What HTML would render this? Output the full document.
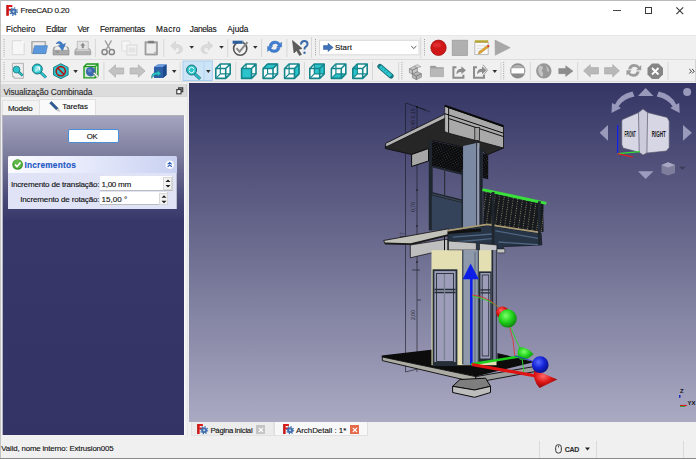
<!DOCTYPE html>
<html><head><meta charset="utf-8">
<style>
*{margin:0;padding:0;box-sizing:border-box}
html,body{width:696px;height:459px;overflow:hidden;background:#f0f0f0}
body{position:relative;font-family:"Liberation Sans",sans-serif;color:#1e1e1e}
.a{position:absolute}
.t{position:absolute;white-space:nowrap;line-height:1;font-size:7.8px;color:#111;-webkit-text-stroke:.12px currentColor}
.sep{position:absolute;width:1px;background:#d4d4d4}
.grip{position:absolute;width:1px;border-left:1px dotted #a8a8a8}
svg{position:absolute;overflow:visible}
</style></head><body>
<!-- window frame -->
<div class="a" style="left:0;top:0;width:696px;height:35px;background:#fff"></div>
<div class="a" style="left:0;top:0;width:696px;height:1px;background:#b9b9b9"></div>
<div class="a" style="left:0;top:0;width:1px;height:459px;background:#c4c4c4"></div>

<!-- title -->
<svg style="left:4px;top:3px" width="16" height="15" viewBox="0 0 16 15"><path d="M2.5,2.1H8.3V4.1H4.9V5.7H7.4V7.5H4.9V12.7H2.5Z" fill="#dc1a1a"/><path d="M2.5,2.1H3.3V12.7H2.5Z" fill="#a80d0d"/><circle cx="9.6" cy="8.6" r="3.1" fill="#416fae"/><circle cx="9.6" cy="8.6" r="3.7" fill="none" stroke="#416fae" stroke-width="1.3" stroke-dasharray="1.3 1.6"/><circle cx="9.6" cy="8.6" r="1.1" fill="#c8d4e8"/></svg>
<div class="t" style="left:20.53px;top:7.35px;font-size:8.09px;color:#111;letter-spacing:-0.236px">FreeCAD 0.20</div>
<div class="a" style="left:613.2px;top:10px;width:7.5px;height:1px;background:#444"></div>
<div class="a" style="left:644.6px;top:7.4px;width:7.2px;height:6.6px;border:1.1px solid #3a3a3a"></div>
<svg style="left:676.3px;top:7.3px" width="8" height="8"><path d="M0.4 0.4L7.2 7.2M7.2 0.4L0.4 7.2" stroke="#3a3a3a" stroke-width="1.15"/></svg>

<!-- menu -->
<div class="t" style="left:6.12px;top:25.38px;font-size:8.29px;letter-spacing:-0.043px">Ficheiro</div>
<div class="t" style="left:46.12px;top:25.38px;font-size:8.29px;letter-spacing:-0.2px">Editar</div>
<div class="t" style="left:77.42px;top:25.38px;font-size:8.29px;letter-spacing:-0.3px">Ver</div>
<div class="t" style="left:99.92px;top:25.38px;font-size:8.29px;letter-spacing:-0.16px">Ferramentas</div>
<div class="t" style="left:156.02px;top:25.38px;font-size:8.29px;letter-spacing:0.35px">Macro</div>
<div class="t" style="left:189.82px;top:25.38px;font-size:8.29px;letter-spacing:-0.3px">Janelas</div>
<div class="t" style="left:227.32px;top:25.38px;font-size:8.29px;letter-spacing:-0.025px">Ajuda</div>

<!-- toolbars -->
<div class="a" style="left:1px;top:35px;width:695px;height:1px;background:#e8e8e8"></div>
<div class="a" style="left:1px;top:59px;width:695px;height:1px;background:#dcdcdc"></div>
<div class="a" style="left:1px;top:81px;width:695px;height:1px;background:#dcdcdc"></div>
<div id="tb"><svg style="left:0;top:0" width="696" height="90" viewBox="0 0 696 90"><path d="M4,39V57" stroke="#a0a0a0" stroke-width="1" stroke-dasharray="1 1.2"/><g transform="translate(11.7,40.2) scale(1.0)"><path d="M0.5,0.5H10L12.5,3V14.5H0.5Z" fill="#f7f7f7" stroke="#d9d9d9"/><circle cx="11" cy="2" r="1.6" fill="#fff" stroke="#e0e0e0" stroke-width=".5"/></g><g transform="translate(31.2,40) scale(1.0)"><path d="M0.5,1.5H14.5V13.5H0.5Z" fill="#c4c4c4" stroke="#9c9c9c" stroke-width=".8"/><path d="M2,2.5H13V8H2Z" fill="#ececec"/><path d="M3.5,5.7H16.3L14.5,13.6H1.6Z" fill="#5a97dc" stroke="#3e78b8" stroke-width=".6"/></g><g transform="translate(53,40) scale(1.0)"><path d="M1,7H15L16,10V15H0V10Z" fill="#a9a9a9" stroke="#8a8a8a" stroke-width=".6"/><path d="M2.5,6.5H13.5L15,10H1Z" fill="#f2f2f2" stroke="#aaa" stroke-width=".5"/><path d="M2.5,12H6" stroke="#777" stroke-width=".8"/><path d="M3,3.5Q7,-1 10,4.5L12.5,3.5L9.5,10.5L5.5,5.5L8,5.2Q6,2.5 3,3.5Z" fill="#3c7cc6" stroke="#2a5e9e" stroke-width=".5"/></g><g transform="translate(74.8,40.8) scale(1.0)"><path d="M1,8H15L16,10.5V14H0V10.5Z" fill="#b0b0b0" stroke="#949494" stroke-width=".6"/><path d="M2.5,0.5H13.5V9H2.5Z" fill="#e4e4e4" stroke="#a4a4a4" stroke-width=".6"/><path d="M8,2L10.5,5H9V7.5H7V5H5.5Z" fill="#8a8a8a"/><path d="M1,9.5H15" stroke="#d8d8d8" stroke-width="1"/></g><rect x="94.9" y="39" width="1" height="18" fill="#d8d8d8"/><g transform="translate(101,40) scale(1.0)"><path d="M4,0.5L9,9M10.5,0.5L5.5,9" stroke="#9a9a9a" stroke-width="1.4"/><circle cx="3.6" cy="12" r="2.6" fill="none" stroke="#858585" stroke-width="1.5"/><circle cx="10.8" cy="12" r="2.6" fill="none" stroke="#858585" stroke-width="1.5"/></g><g transform="translate(121.4,40.5) scale(1.0)"><path d="M0.5,0.5H8.5V10.5H0.5Z" fill="#f6f6f6" stroke="#dedede"/><path d="M5.5,4.5H15.5V14.5H5.5Z" fill="#f2f2f2" stroke="#d6d6d6"/><path d="M7,7H14V12H7Z" fill="#e4e4e4"/></g><g transform="translate(144.2,40) scale(1.0)"><path d="M0.8,1.8H13.2V15H0.8Z" fill="#a8a8a8" stroke="#8c8c8c" stroke-width=".7"/><path d="M2.3,3.5H11.7V13.5H2.3Z" fill="#ededed"/><path d="M4,0.8H10V3.2H4Z" fill="#7c7c7c"/><path d="M9,13.5L11.7,11V13.5Z" fill="#b0b0b0"/></g><rect x="163.3" y="39" width="1" height="18" fill="#d8d8d8"/><g transform="translate(170,40.8) scale(1.0)"><path d="M5.5,0.5L0.5,5L5.5,9.5V6.8Q10,6.5 9.5,9.5Q9,12 6,12.5Q11.5,13.5 12.5,9Q13,4 5.5,3.5Z" fill="#dadada" stroke="#cfcfcf" stroke-width=".5"/></g><path d="M189.39999999999998,45.900000000000006H194.0L191.7,48.7Z" fill="#303030"/><g transform="translate(200.5,40.8) scale(1.0)"><path d="M7.5,0.5L12.5,5L7.5,9.5V6.8Q3,6.5 3.5,9.5Q4,12 7,12.5Q1.5,13.5 0.5,9Q0,4 7.5,3.5Z" fill="#dadada" stroke="#cfcfcf" stroke-width=".5"/></g><path d="M219.2,45.900000000000006H223.8L221.5,48.7Z" fill="#303030"/><rect x="227.2" y="39" width="1" height="18" fill="#d8d8d8"/><g transform="translate(232,40.2) scale(1.0)"><circle cx="8.2" cy="8.4" r="6.6" fill="#f4f4f4" stroke="#555" stroke-width="1.6"/><path d="M4.5,8L7.5,11.5L15.5,2" fill="none" stroke="#8a8a8a" stroke-width="2"/><path d="M0.6,0.5H10.5V3.6H0.6Z" fill="#2d5e9e"/><path d="M10.5,0.5H12L10.5,3.6Z" fill="#7da0cc"/></g><path d="M253.0,45.900000000000006H257.6L255.3,48.7Z" fill="#303030"/><rect x="261.0" y="39" width="1" height="18" fill="#d8d8d8"/><g transform="translate(267.6,40) scale(1.0)"><path d="M1.5,6Q2.5,1 7.5,1Q11,1 12.5,3.5L14,2V7H9L10.8,5.3Q9.5,3.5 7.5,3.5Q5,3.5 4.3,6Z" fill="#3d7fd4" stroke="#2a62ae" stroke-width=".4"/><path d="M12.5,7.5Q11.5,12.5 6.5,12.5Q3,12.5 1.5,10L0,11.5V6.5H5L3.2,8.2Q4.5,10 6.5,10Q9,10 9.7,7.5Z" fill="#3d7fd4" stroke="#2a62ae" stroke-width=".4"/></g><rect x="286.4" y="39" width="1" height="18" fill="#d8d8d8"/><g transform="translate(292,40) scale(1.0)"><path d="M0.5,0.5L10,8.5L6.5,9.5L9.5,14.5L7.5,15.5L4.5,10.5L2,13Z" fill="#5c5c5c" stroke="#3c3c3c" stroke-width=".5"/><path d="M9,4.5Q9,1 12.3,1Q15.5,1 15.5,4Q15.5,6 13.5,7Q12.5,7.5 12.5,9.5" fill="none" stroke="#3a6aa8" stroke-width="2"/><circle cx="12.5" cy="12.8" r="1.2" fill="#3a6aa8"/></g><rect x="311.0" y="37" width="1" height="21" fill="#d8d8d8"/><path d="M315.5,39V56" stroke="#a0a0a0" stroke-width="1" stroke-dasharray="1 1.2"/><rect x="319.5" y="40.3" width="99.5" height="14.5" fill="#fff" stroke="#d9d9d9" stroke-width="1"/><path d="M323.5,45.5H328V43.3L333.2,47.5L328,51.5V49.5H323.5Z" fill="#3f72b8" stroke="#2b5a98" stroke-width=".5"/><path d="M411.2,46L413.8,48.5L416.4,46" fill="none" stroke="#444" stroke-width=".9"/><rect x="420.2" y="37" width="1" height="21" fill="#d8d8d8"/><path d="M424.5,39V56" stroke="#a0a0a0" stroke-width="1" stroke-dasharray="1 1.2"/><circle cx="438.5" cy="47.8" r="7.7" fill="#d01818"/><circle cx="438.5" cy="47.8" r="7.7" fill="none" stroke="#9c0a0a" stroke-width=".7"/><ellipse cx="437" cy="45" rx="4" ry="2.5" fill="#f04040" opacity=".5"/><rect x="452.2" y="40.2" width="15.3" height="15.3" fill="#b0b0b0" stroke="#9a9a9a" stroke-width=".7"/><g transform="translate(474,39.8) scale(1.0)"><path d="M0.8,2.5H14.2V14.8H0.8Z" fill="#fafafa" stroke="#a8a8a8" stroke-width=".8"/><path d="M0.8,0.5H14.2V2.8H0.8Z" fill="#b6a52c"/><path d="M2.5,6H12M2.5,8.5H8M2.5,11H7" stroke="#c8c8c8" stroke-width=".6"/><path d="M5,12L13.5,5.5L15,7L6.5,13.5L4.3,14Z" fill="#e8a830" stroke="#a07010" stroke-width=".5"/><circle cx="14.3" cy="6.2" r="1.1" fill="#e03030"/></g><path d="M495,40.1L510.2,47.7L495.2,55.3Z" fill="#a8a8a8" stroke="#989898" stroke-width=".5"/><path d="M4,62V80" stroke="#a0a0a0" stroke-width="1" stroke-dasharray="1 1.2"/><g transform="translate(11.9,62.8) scale(1.0)"><path d="M0.5,0.5H11.5V15.5H2.5L0.5,13.5Z" fill="#ececec" stroke="#9a9a9a" stroke-width=".7"/><path d="M0.5,13.5H2.5V15.5Z" fill="#aaa"/><path d="M6.5,9L10.8,12.8" stroke="#18737a" stroke-width="2.6"/><path d="M6.5,9L10.8,12.8" stroke="#2cc4cc" stroke-width="1.4"/><circle cx="4.6" cy="6.8" r="3.4" fill="#2cc4cc" stroke="#18737a" stroke-width=".8"/></g><g transform="translate(31.5,62.5) scale(1.0)"><path d="M8.5,9.5L14.5,15" stroke="#18737a" stroke-width="3"/><path d="M8.5,9.5L14.5,15" stroke="#2cc4cc" stroke-width="1.7"/><circle cx="5.8" cy="6.5" r="5" fill="#2cc4cc" stroke="#18737a" stroke-width="1"/><circle cx="5.8" cy="6.5" r="3" fill="#7ee0e4"/><path d="M3.5,9L7.5,5M5,4.5H8V7.5" fill="none" stroke="#fff" stroke-width="1"/></g><g transform="translate(52.8,63.2) scale(1.0)"><path d="M8,0.5L15.3,4.2V11.8L8,15.5L0.7,11.8V4.2Z" fill="#2cc4cc" stroke="#18737a" stroke-width=".9"/><circle cx="8" cy="8" r="4.6" fill="none" stroke="#b01818" stroke-width="1.6"/><path d="M4.8,4.8L11.2,11.2" stroke="#b01818" stroke-width="1.6"/></g><path d="M73.3,70.10000000000001H77.89999999999999L75.6,72.9Z" fill="#303030"/><g transform="translate(83.2,63.2) scale(1.0)"><path d="M0.8,3.5L3.5,0.8H14.7V12L12,14.7H0.8Z" fill="#d8e8d8" stroke="#1c9a1c" stroke-width="1.4"/><path d="M0.8,3.5H12V14.7M12,3.5L14.7,0.8" fill="none" stroke="#1c9a1c" stroke-width="1.2"/><circle cx="7.5" cy="8.5" r="4.8" fill="#3c68ae"/><circle cx="6.5" cy="7.2" r="2" fill="#7aa0d8" opacity=".6"/><path d="M10,10L14,14.5L15.5,13L11,9Z" fill="#fff" stroke="#777" stroke-width=".5"/></g><rect x="103.4" y="62" width="1" height="18" fill="#d8d8d8"/><g transform="translate(108.2,64.5) scale(1.0)"><path d="M0.5,6.5L7.3,0.3V3.5H15.5V9.5H7.3V12.7Z" fill="#c2c2c2" stroke="#a6a6a6" stroke-width=".6"/></g><g transform="translate(129.6,64.5) scale(1.0)"><path d="M15.5,6.5L8.7,0.3V3.5H0.5V9.5H8.7V12.7Z" fill="#c2c2c2" stroke="#a6a6a6" stroke-width=".6"/></g><g transform="translate(151,63.6) scale(1.0)"><path d="M3,3.5L7,0.8H15.5V11.5L12,14.5H3Z" fill="#2d5ea8"/><path d="M3,3.5L7,0.8H15.5L12,3.5Z" fill="#6a9ade"/><path d="M12,3.5L15.5,0.8V11.5L12,14.5Z" fill="#1e4a8a"/><path d="M0.5,14.5Q0.5,8.5 6.5,8.5V6.5L10,10L6.5,13V11Q3,11 0.5,14.5Z" fill="#2cc4cc" stroke="#18737a" stroke-width=".6"/></g><path d="M171.89999999999998,70.10000000000001H176.5L174.2,72.9Z" fill="#303030"/><rect x="179.7" y="62" width="1" height="18" fill="#d8d8d8"/><rect x="183" y="61" width="29.3" height="19.5" fill="#cde4f7" stroke="#a6cdf0" stroke-width="1"/><rect x="203.6" y="61.5" width="0.8" height="18.5" fill="#b0d2f2"/><g transform="translate(185.6,63.8) scale(1.0)"><path d="M8.5,9.5L14.5,15" stroke="#18737a" stroke-width="3"/><path d="M8.5,9.5L14.5,15" stroke="#2cc4cc" stroke-width="1.7"/><circle cx="6" cy="6.2" r="5" fill="#2cc4cc" stroke="#18737a" stroke-width="1"/><path d="M3.5,6Q3.5,3.5 6,3.5Q8,3.5 8.5,5.5M8.5,6.5Q8.5,9 6,9Q4,9 3.5,7" fill="none" stroke="#fff" stroke-width=".9"/></g><path d="M206.0,70.10000000000001H210.60000000000002L208.3,72.9Z" fill="#303030"/><g transform="translate(215,63.2) scale(1.0)"><path d="M0.8,5.3H10.7V15.2H0.8Z" fill="#fff"/><path d="M0.8,5.3L5.3,0.8H15.2L10.7,5.3Z" fill="#fff"/><path d="M10.7,5.3L15.2,0.8V10.7L10.7,15.2Z" fill="#fff"/><path d="M5.3,0.8V10.7H15.2M5.3,10.7L0.8,15.2" fill="none" stroke="#15868c" stroke-width="1.2"/><path d="M0.8,5.3H10.7V15.2H0.8ZM0.8,5.3L5.3,0.8H15.2L10.7,5.3ZM10.7,5.3L15.2,0.8V10.7L10.7,15.2Z" fill="none" stroke="#15868c" stroke-width="1.6" stroke-linejoin="round"/></g><rect x="235.3" y="62" width="1" height="18" fill="#d8d8d8"/><g transform="translate(240.8,63.2) scale(1.0)"><path d="M0.8,5.3H10.7V15.2H0.8Z" fill="#fff"/><path d="M0.8,5.3L5.3,0.8H15.2L10.7,5.3Z" fill="#fff"/><path d="M10.7,5.3L15.2,0.8V10.7L10.7,15.2Z" fill="#fff"/><path d="M0.8,5.3H10.7V15.2H0.8Z" fill="#2cc4cc"/><path d="M5.3,0.8V10.7H15.2M5.3,10.7L0.8,15.2" fill="none" stroke="#15868c" stroke-width="1.2"/><path d="M0.8,5.3H10.7V15.2H0.8Z" fill="#2cc4cc" stroke="#15868c" stroke-width=".8"/><path d="M0.8,5.3H10.7V15.2H0.8ZM0.8,5.3L5.3,0.8H15.2L10.7,5.3ZM10.7,5.3L15.2,0.8V10.7L10.7,15.2Z" fill="none" stroke="#15868c" stroke-width="1.6" stroke-linejoin="round"/></g><g transform="translate(262.3,63.2) scale(1.0)"><path d="M0.8,5.3H10.7V15.2H0.8Z" fill="#fff"/><path d="M0.8,5.3L5.3,0.8H15.2L10.7,5.3Z" fill="#fff"/><path d="M10.7,5.3L15.2,0.8V10.7L10.7,15.2Z" fill="#fff"/><path d="M0.8,5.3L5.3,0.8H15.2L10.7,5.3Z" fill="#2cc4cc"/><path d="M5.3,0.8V10.7H15.2M5.3,10.7L0.8,15.2" fill="none" stroke="#15868c" stroke-width="1.2"/><path d="M0.8,5.3L5.3,0.8H15.2L10.7,5.3Z" fill="#2cc4cc" stroke="#15868c" stroke-width=".8"/><path d="M0.8,5.3H10.7V15.2H0.8ZM0.8,5.3L5.3,0.8H15.2L10.7,5.3ZM10.7,5.3L15.2,0.8V10.7L10.7,15.2Z" fill="none" stroke="#15868c" stroke-width="1.6" stroke-linejoin="round"/></g><g transform="translate(283.8,63.2) scale(1.0)"><path d="M0.8,5.3H10.7V15.2H0.8Z" fill="#fff"/><path d="M0.8,5.3L5.3,0.8H15.2L10.7,5.3Z" fill="#fff"/><path d="M10.7,5.3L15.2,0.8V10.7L10.7,15.2Z" fill="#fff"/><path d="M10.7,5.3L15.2,0.8V10.7L10.7,15.2Z" fill="#2cc4cc"/><path d="M5.3,0.8V10.7H15.2M5.3,10.7L0.8,15.2" fill="none" stroke="#15868c" stroke-width="1.2"/><path d="M10.7,5.3L15.2,0.8V10.7L10.7,15.2Z" fill="#2cc4cc" stroke="#15868c" stroke-width=".8"/><path d="M0.8,5.3H10.7V15.2H0.8ZM0.8,5.3L5.3,0.8H15.2L10.7,5.3ZM10.7,5.3L15.2,0.8V10.7L10.7,15.2Z" fill="none" stroke="#15868c" stroke-width="1.6" stroke-linejoin="round"/></g><rect x="303.9" y="62" width="1" height="18" fill="#d8d8d8"/><g transform="translate(309,63.2) scale(1.0)"><path d="M0.8,5.3H10.7V15.2H0.8Z" fill="#fff"/><path d="M0.8,5.3L5.3,0.8H15.2L10.7,5.3Z" fill="#fff"/><path d="M10.7,5.3L15.2,0.8V10.7L10.7,15.2Z" fill="#fff"/><path d="M5.3,0.8H15.2V10.7H5.3Z" fill="#2cc4cc"/><path d="M5.3,0.8V10.7H15.2M5.3,10.7L0.8,15.2" fill="none" stroke="#15868c" stroke-width="1.2"/><path d="M0.8,5.3H10.7V15.2H0.8ZM0.8,5.3L5.3,0.8H15.2L10.7,5.3ZM10.7,5.3L15.2,0.8V10.7L10.7,15.2Z" fill="none" stroke="#15868c" stroke-width="1.6" stroke-linejoin="round"/></g><g transform="translate(330.6,63.2) scale(1.0)"><path d="M0.8,5.3H10.7V15.2H0.8Z" fill="#fff"/><path d="M0.8,5.3L5.3,0.8H15.2L10.7,5.3Z" fill="#fff"/><path d="M10.7,5.3L15.2,0.8V10.7L10.7,15.2Z" fill="#fff"/><path d="M0.8,15.2L5.3,10.7H15.2L10.7,15.2Z" fill="#2cc4cc"/><path d="M5.3,0.8V10.7H15.2M5.3,10.7L0.8,15.2" fill="none" stroke="#15868c" stroke-width="1.2"/><path d="M0.8,5.3H10.7V15.2H0.8ZM0.8,5.3L5.3,0.8H15.2L10.7,5.3ZM10.7,5.3L15.2,0.8V10.7L10.7,15.2Z" fill="none" stroke="#15868c" stroke-width="1.6" stroke-linejoin="round"/></g><g transform="translate(352,63.2) scale(1.0)"><path d="M0.8,5.3H10.7V15.2H0.8Z" fill="#fff"/><path d="M0.8,5.3L5.3,0.8H15.2L10.7,5.3Z" fill="#fff"/><path d="M10.7,5.3L15.2,0.8V10.7L10.7,15.2Z" fill="#fff"/><path d="M0.8,5.3L5.3,0.8V10.7L0.8,15.2Z" fill="#2cc4cc"/><path d="M5.3,0.8V10.7H15.2M5.3,10.7L0.8,15.2" fill="none" stroke="#15868c" stroke-width="1.2"/><path d="M0.8,5.3H10.7V15.2H0.8ZM0.8,5.3L5.3,0.8H15.2L10.7,5.3ZM10.7,5.3L15.2,0.8V10.7L10.7,15.2Z" fill="none" stroke="#15868c" stroke-width="1.6" stroke-linejoin="round"/></g><rect x="372.0" y="62" width="1" height="18" fill="#d8d8d8"/><path d="M380,66.5L391,76" stroke="#18737a" stroke-width="5.2" stroke-linecap="round"/><path d="M380,66.5L391,76" stroke="#2cc4cc" stroke-width="3.6"/><path d="M381.5,68.5L383,67M384,71L385.5,69.5M386.5,73L388,71.5" stroke="#18737a" stroke-width=".6"/><rect x="398.2" y="62" width="1" height="18" fill="#d8d8d8"/><path d="M401.9,62V80" stroke="#a0a0a0" stroke-width="1" stroke-dasharray="1 1.2"/><g transform="translate(408.4,63.7) scale(1.0)"><path d="M1,5L6,2.5L9,4L4,6.5Z M1,5V9L4,10.5V6.5Z M4,6.5L9,4V8L4,10.5Z" fill="#c8c8c8" stroke="#7a7a7a" stroke-width=".6"/><path d="M4,10.5L9,8L13,10L8,12.5Z M4,10.5V14L8,16V12.5Z M8,12.5L13,10V13.5L8,16Z" fill="#b4b4b4" stroke="#7a7a7a" stroke-width=".6"/><path d="M6,2.5L9,1L12.5,3L9,4Z" fill="#d8d8d8" stroke="#7a7a7a" stroke-width=".5"/></g><g transform="translate(429.9,65.6) scale(1.0)"><path d="M0.5,0.5H5.5L7,2H13.5V11H0.5Z" fill="#a0a0a0" stroke="#909090" stroke-width=".5"/><path d="M0.5,3H13.5V11.2H0.5Z" fill="#b8b8b8"/></g><g transform="translate(451.4,63.7) scale(1.0)"><path d="M1,2.5H5V4.5H3V13H11V11H13V15H1Z" fill="#8c8c8c"/><path d="M5,10.5Q5,5 10,5V2.5L14.5,6.5L10,10.5V8Q7,8 5,10.5Z" fill="#8c8c8c"/></g><g transform="translate(472,63.7) scale(1.0)"><path d="M1,2.5H5V4.5H3V13H11V11H13V15H1Z" fill="#8c8c8c"/><path d="M5,10.5Q5,5 10,5V2.5L14.5,6.5L10,10.5V8Q7,8 5,10.5Z" fill="#8c8c8c"/><path d="M11,1L15.5,6.5L11,12" fill="none" stroke="#9c9c9c" stroke-width="1"/></g><path d="M492.5,70.10000000000001H497.1L494.8,72.9Z" fill="#303030"/><rect x="500.4" y="62" width="1" height="18" fill="#d8d8d8"/><path d="M503.7,62V80" stroke="#a0a0a0" stroke-width="1" stroke-dasharray="1 1.2"/><g transform="translate(510.3,62.8) scale(1.0)"><circle cx="7.5" cy="8" r="7.6" fill="#8c8c8c"/><path d="M1,6.5A7,7 0 0 1 14,6.5Z" fill="#b4b4b4"/><path d="M0.8,5H14.2V11H0.8Z" fill="#fff" stroke="#8a8a8a" stroke-width=".6"/></g><rect x="529.9" y="62" width="1" height="18" fill="#d8d8d8"/><g transform="translate(536,62.9) scale(1.0)"><circle cx="7.8" cy="8" r="7.7" fill="#999"/><path d="M4,2.5Q7.5,3 7,5.5Q5,7 6.5,9Q8,11 6,14Q3,12 2.5,9Q1.5,5 4,2.5Z" fill="#c4c4c4"/><path d="M10,3Q13.5,5 13,9L11,8Q10.5,5 10,3Z" fill="#bdbdbd"/></g><g transform="translate(558.2,65.5) scale(1.0)"><path d="M0.5,3H7.5V0.2L14.8,5.6L7.5,11V8.2H0.5Z" fill="#8c8c8c" stroke="#7a7a7a" stroke-width=".4"/></g><rect x="577.2" y="62" width="1" height="18" fill="#d8d8d8"/><g transform="translate(583,64.3) scale(1.0)"><path d="M0.5,6.5L7.3,0.3V3.3H15.5V9.7H7.3V12.7Z" fill="#b8b8b8" stroke="#a0a0a0" stroke-width=".5"/></g><g transform="translate(604,64.3) scale(1.0)"><path d="M15.5,6.5L8.7,0.3V3.3H0.5V9.7H8.7V12.7Z" fill="#b8b8b8" stroke="#a0a0a0" stroke-width=".5"/></g><g transform="translate(626.5,63) scale(1.0)"><g transform="scale(1.05)"><path d="M1.5,6Q2.5,1 7.5,1Q11,1 12.5,3.5L14,2V7H9L10.8,5.3Q9.5,3.5 7.5,3.5Q5,3.5 4.3,6Z" fill="#9c9c9c"/><path d="M12.5,8Q11.5,13 6.5,13Q3,13 1.5,10.5L0,12V7H5L3.2,8.7Q4.5,10.5 6.5,10.5Q9,10.5 9.7,8Z" fill="#9c9c9c"/></g></g><g transform="translate(647,63) scale(1.0)"><path d="M5,0.5H11.5L16,5V11.5L11.5,16H5L0.5,11.5V5Z" fill="#858585"/><path d="M5,5L11.5,11.5M11.5,5L5,11.5" stroke="#fff" stroke-width="1.8"/></g><rect x="667.5" y="62" width="1" height="18" fill="#d8d8d8"/><path d="M689.3,69L691.5,71.2L689.3,73.4M692.1,69L694.3,71.2L692.1,73.4" fill="none" stroke="#3a3a3a" stroke-width="1"/><rect x="695" y="60" width="1" height="22" fill="#d4d4d4"/></svg><div class="t" style="left:334.95px;top:44.31px;font-size:7.9px;color:#111;letter-spacing:0.1px">Start</div></div><!--/tb-->

<!-- combined view panel -->
<div class="a" style="left:1px;top:84px;width:185.5px;height:13px;background:#dcdcdc;border-right:1px solid #d0d0d0;border-bottom:1px solid #d6d6d6"></div>
<div class="t" style="left:3.42px;top:87.58px;font-size:8.29px;color:#2a2a2a;letter-spacing:-0.095px">Visualização Combinada</div>
<svg style="left:175.5px;top:87px" width="8" height="8"><rect x="2.6" y="0.8" width="4.2" height="4" fill="#888" stroke="#333" stroke-width="1"/><rect x="0.8" y="2.6" width="4.2" height="4.2" fill="#fff" stroke="#333" stroke-width="1.1"/></svg>

<div class="a" style="left:2px;top:100px;width:38px;height:16px;background:#f3f3f3;border:1px solid #e2e2e2;border-bottom:none"></div>
<div class="a" style="left:39px;top:98.5px;width:57px;height:18px;background:#fafafa;border:1px solid #e0e0e0;border-bottom:none"></div>
<div class="t" style="left:8.04px;top:104.54px;font-size:7.98px;color:#111;letter-spacing:-0.3px">Modelo</div>
<svg style="left:49px;top:100.5px" width="12" height="11"><path d="M0.6 2.2L2.4 0.4L9.2 7.2L7.4 9Z" fill="#2f5c98" stroke="#1e3e6c" stroke-width=".5"/><path d="M7.4 9L9.2 7.2L10.6 10.4Z" fill="#d8d8d8" stroke="#888" stroke-width=".4"/></svg>
<div class="t" style="left:62.24px;top:103.44px;font-size:7.98px;color:#111;letter-spacing:-0.067px">Tarefas</div>

<div class="a" style="left:2px;top:115.3px;width:181.5px;height:319.5px;background:linear-gradient(#a5a5c0 0px,#7b7b9c 40px,#4c4c7a 80px,#373769 105px,#333366 319px);border-left:1px solid #b4b4c4;border-top:1px solid #b0b0b8"></div><div class="a" style="left:183.5px;top:115.3px;width:1px;height:320px;background:#fafafa"></div>

<!-- OK button -->
<div class="a" style="left:68px;top:128.8px;width:50.5px;height:14.5px;background:#fff;border:1.3px solid #4b8fd6;border-radius:2px"></div>
<div class="t" style="left:86.86px;top:133.12px;font-size:7.77px;color:#111;letter-spacing:-0.3px">OK</div>

<!-- Incrementos box -->
<div class="a" style="left:8px;top:156px;width:169px;height:53px;background:#dfe3f5;border-radius:2px 2px 0 0;border-right:1px solid #b8bcd0"></div>
<div class="a" style="left:8px;top:156px;width:169px;height:16.5px;background:linear-gradient(90deg,#fbfbff,#e9ecfb 40%,#c9d1f2);border-radius:2px 2px 0 0"></div>
<svg style="left:12px;top:158.5px" width="12" height="11"><circle cx="5.6" cy="5.5" r="5.3" fill="#3d9a2d"/><circle cx="5.6" cy="5" r="4.2" fill="#63b84a"/><path d="M3 5.5L5 7.5L8.5 3.5" stroke="#fff" stroke-width="1.6" fill="none"/></svg>
<div class="t" style="left:24.42px;top:161.37px;font-size:8.3px;font-weight:bold;color:#2257c4;letter-spacing:0.21px">Incrementos</div>
<svg style="left:164.5px;top:159.5px" width="10" height="10"><circle cx="4.7" cy="4.7" r="4.5" fill="#fff" stroke="#c7cde6" stroke-width=".6"/><path d="M2.6 4.3L4.7 2.4L6.8 4.3M2.6 6.9L4.7 5L6.8 6.9" stroke="#2d5ab8" stroke-width="1.1" fill="none"/></svg>

<div class="t" style="left:10.93px;top:181.05px;font-size:8.09px;color:#111;letter-spacing:-0.2px">Incremento de translação:</div>
<div class="t" style="left:20.23px;top:195.85px;font-size:8.09px;color:#111;letter-spacing:-0.176px">Incremento de rotação:</div>

<div class="a" style="left:100px;top:176px;width:72.6px;height:14.5px;background:#fff;border-bottom:1px solid #bdbdbd;border-right:1px solid #d0d0d0"></div>
<div class="a" style="left:163px;top:177px;width:9px;height:12.5px;background:#f2f2f2;border:1px solid #d8d8d8"></div>
<svg style="left:165px;top:178px" width="6" height="11"><path d="M0.5 4L3 1.5L5.5 4Z M0.5 7L3 9.5L5.5 7Z" fill="#222"/></svg>
<div class="t" style="left:101.53px;top:180.65px;font-size:8.09px;color:#111;letter-spacing:-0.3px">1,00 mm</div>

<div class="a" style="left:100px;top:191.7px;width:67.7px;height:13.5px;background:#fff;border-bottom:1px solid #bdbdbd;border-right:1px solid #d0d0d0"></div>
<div class="a" style="left:158.5px;top:192.5px;width:9px;height:12px;background:#f2f2f2;border:1px solid #d8d8d8"></div>
<svg style="left:160.5px;top:193.5px" width="6" height="11"><path d="M0.5 3.8L3 1.3L5.5 3.8Z M0.5 6.7L3 9.2L5.5 6.7Z" fill="#222"/></svg>
<div class="t" style="left:101.53px;top:195.75px;font-size:8.09px;color:#111;letter-spacing:0.0px">15,00 °</div>

<!-- splitter -->
<div class="a" style="left:187px;top:83px;width:1px;height:354px;background:#e6e6e6"></div>

<!-- 3D view -->
<div class="a" id="view" style="left:189px;top:83px;width:507px;height:338.5px;background:linear-gradient(#353565 0%,#6f6f92 51%,#aaaac3 100%)"></div>
<svg id="scene" style="left:0;top:0" width="696" height="459" viewBox="0 0 696 459">
<defs>
<pattern id="dots" width="2.4" height="2.4" patternUnits="userSpaceOnUse" patternTransform="rotate(-30)"><rect width="2.4" height="2.4" fill="#0c0d10"/><circle cx="1.2" cy="1.2" r=".38" fill="#5e5a42"/></pattern>
<pattern id="mesh" width="4.6" height="2.3" patternUnits="userSpaceOnUse" patternTransform="rotate(8)"><rect width="4.6" height="2.3" fill="#16191e"/><circle cx="2.3" cy="1.15" r=".55" fill="#8e8866"/></pattern>
<radialGradient id="gs" cx=".4" cy=".35" r=".7"><stop offset="0" stop-color="#7dff6a"/><stop offset=".5" stop-color="#22d41c"/><stop offset="1" stop-color="#0e7a10"/></radialGradient>
<radialGradient id="rs" cx=".4" cy=".35" r=".7"><stop offset="0" stop-color="#ff6a6a"/><stop offset=".5" stop-color="#dd1515"/><stop offset="1" stop-color="#7a0a0a"/></radialGradient>
<radialGradient id="bs" cx=".4" cy=".35" r=".7"><stop offset="0" stop-color="#5a6aff"/><stop offset=".5" stop-color="#1525d8"/><stop offset="1" stop-color="#08107a"/></radialGradient>
</defs>
<!-- dimension lines -->
<g stroke="#151520" stroke-width=".7" fill="none" opacity=".85">
<path d="M405.5 103V372M417 107V372M406 103L426 110M417 107L430 112M417 128L427 131M405.5 372L417 369M412 253H418M412 270H420M417 300H421"/>
</g>
<g font-family="Liberation Sans" font-size="5.2" fill="#111" opacity=".8">
<text transform="translate(415,130) rotate(-90)">0,45  0,15</text>
<text transform="translate(415,212) rotate(-90)">0,70</text>
<text transform="translate(415,320) rotate(-90)">2,00</text>
<text transform="translate(404,238) rotate(-90)">17</text>
</g>
<circle cx="417" cy="107" r=".9" fill="#111"/><circle cx="417" cy="128" r=".8" fill="#111"/><circle cx="417" cy="190" r=".8" fill="#111"/><circle cx="417" cy="226" r=".8" fill="#111"/><circle cx="417" cy="262" r=".8" fill="#111"/>
<!-- roof -->
<polygon points="385.4,146 448.6,116 503.5,148 487,155 475,143 463.3,147 431,140 429,148.5 411.6,154.5 385.4,148.5" fill="#262626" stroke="#0a0a0a" stroke-width=".8"/>
<polygon points="385.4,143.5 445,114 448.6,116.5 386,147" fill="#b2b2b2" stroke="#0a0a0a" stroke-width=".8"/>
<polygon points="444.7,105.8 448.6,107.7 448.6,133.2 444.7,131.5" fill="#b6b6b6" stroke="#0a0a0a" stroke-width=".6"/>
<polygon points="448.6,107.7 503.5,126.4 503.5,148 448.6,133.2" fill="#a9a9a9" stroke="#0a0a0a" stroke-width=".8"/>
<path d="M444.7,105.6L503.5,126.2" stroke="#0a0a0a" stroke-width="2"/>
<path d="M444.7,113.6L503.5,133.2M448.6,118.5L503.5,136.6" stroke="#0a0a0a" stroke-width="1"/>
<polygon points="411.6,154.5 428.5,148.5 428.5,161 411.6,166.5" fill="#a6a6a6" stroke="#0a0a0a" stroke-width="1"/>
<!-- cabin -->
<rect x="428.8" y="140" width="3.9" height="90.4" fill="#1f262e"/>
<polygon points="432,141 463.3,147.5 463.3,173.5 432,166" fill="url(#dots)"/>
<polygon points="432.7,165.5 462.2,173 462.2,175 432.7,167.5" fill="#1f262e"/>
<rect x="444" y="168" width="1.2" height="27" fill="#2a3038"/>
<polygon points="431.8,192 462.2,199.5 462.2,203.5 431.8,196" fill="#1f262e"/>
<path d="M432,194L462,201.5" stroke="#56627a" stroke-width=".6"/>
<polygon points="431.8,195.5 462.2,203 462.2,228.5 431.8,230.4" fill="#35435a"/>
<rect x="461.5" y="170" width="1.6" height="60" fill="#1f262e"/>
<polygon points="463.1,146 476.2,143 476.2,229 463.1,229" fill="#7b8aa2"/>
<rect x="476.2" y="128" width="0.9" height="101" fill="#2a323c"/>
<rect x="477.1" y="143" width="2.4" height="86" fill="#949cae"/>
<rect x="474.8" y="127.5" width="4.7" height="13" fill="#a0a0a0" stroke="#0a0a0a" stroke-width=".7"/>
<rect x="479.5" y="148" width="3.2" height="81" fill="#1f262e"/>
<polygon points="482.7,153 488.2,155.3 488.2,179.2 482.7,178" fill="url(#dots)"/>
<!-- balcony -->
<polygon points="483.3,191 543.5,204 543.5,232 483.3,224" fill="url(#mesh)"/>
<path d="M482.4,189.6L546.3,203.4" stroke="#38e03a" stroke-width="3"/>
<!-- main floor slab -->
<polygon points="383.7,240.5 448.4,228.8 448.4,235.5 411,244.5 385,244" fill="#c2c2ba" stroke="#0a0a0a" stroke-width=".8"/>
<path d="M385,243.3L411,244L448,235" fill="none" stroke="#1a1a1a" stroke-width="1.6"/>
<polygon points="410.3,245 445.2,239.5 448,239.5 448,252 431,253 410.3,257.8" fill="#bebebe" stroke="#0a0a0a" stroke-width=".7"/>
<rect x="444" y="236" width="1" height="15" fill="#111"/>
<polygon points="447.9,231.6 487.4,225.3 541.1,233.2 541.9,245 503.2,246.6 503.2,252.5 447.9,250.5" fill="#263446" stroke="#0a0a0a" stroke-width=".6"/>
<path d="M452.6,237.1L492.1,234M495.3,230.8L539.5,238.7M455.8,242L492.1,238.7M498.5,242L541.1,245" stroke="#4f6580" stroke-width="1.3"/>
<polygon points="447.9,230.5 481,228.5 481,231.5 447.9,234" fill="#111"/>
<polygon points="448.5,241 476.3,243 476.3,250 448.5,250" fill="#c2c2c2" stroke="#111" stroke-width=".6"/>
<polygon points="479.5,243.4 496.9,245 496.9,252.2 479.5,252" fill="#c6c6c6" stroke="#111" stroke-width=".6"/>
<polygon points="496.9,249 504.8,249 504.8,252.9 496.9,252.9" fill="#c6c6c6" stroke="#111" stroke-width=".5"/>
<path d="M447.9,230.6L487.4,224.4L539.5,232.4" fill="none" stroke="#a99a72" stroke-width="1.8"/>
<rect x="491.7" y="192" width="2.7" height="52" fill="#1f262e"/>
<rect x="538" y="201.3" width="2.7" height="44" fill="#1f262e"/>
<!-- base top -->
<polygon points="381.7,355.5 433,349.5 497,353 534.5,362 475.8,376.6 381.7,357" fill="#0c0c0c"/>
<!-- lower floor -->
<rect x="431.5" y="250.2" width="65" height="115" fill="#e3dfb3"/>
<rect x="433.5" y="270.2" width="23" height="95" fill="#9d9db9" stroke="#252d36" stroke-width="1.8"/><rect x="433" y="362" width="24" height="4" fill="#252d36"/>
<rect x="436.5" y="273.5" width="17" height="88" fill="none" stroke="#2f3740" stroke-width="1"/>
<path d="M434.5,289.5H455.5M434.5,292.5H455.5" stroke="#252d36" stroke-width="1.3"/>
<rect x="443.8" y="274" width="1.3" height="86" fill="#7a7f90"/>
<rect x="462.2" y="250" width="16.6" height="115" fill="#8e9aab"/>
<rect x="462.2" y="250" width="1.2" height="114" fill="#3a4450"/>
<rect x="474.5" y="252" width="1" height="112" fill="#5e6a7a"/>
<rect x="477.8" y="250" width="1" height="114" fill="#3a4450"/>
<rect x="479.6" y="272.2" width="11.5" height="89" fill="#9d9db9" stroke="#252d36" stroke-width="1.6"/><rect x="479" y="358.5" width="12.5" height="3.5" fill="#252d36"/>
<rect x="482.2" y="275" width="6.5" height="81" fill="none" stroke="#2f3740" stroke-width=".9"/>
<path d="M480.5,289.8H490.5M480.5,292.8H490.5" stroke="#252d36" stroke-width="1.2"/>
<rect x="491.6" y="250" width="5.9" height="110" fill="#7d7f9a"/>
<rect x="491.6" y="250" width="1.6" height="110" fill="#252d36"/>
<rect x="495.8" y="250" width="1.2" height="110" fill="#3a4050"/>
<polygon points="470.6,263.6 462.7,279.3 478.8,279.3" fill="#0d1ee6"/>
<rect x="470" y="279" width="2.6" height="85.5" fill="#0d1ee6"/>
<!-- base slab -->
<polygon points="382.3,357 475.8,376.6 475.8,382.5 382.3,360.6" fill="#acaca4" stroke="#0a0a0a" stroke-width=".9"/>
<polygon points="475.8,376.6 534.5,366.5 534.5,371.7 475.8,382.5" fill="#9c9c9c" stroke="#0a0a0a" stroke-width=".9"/>
<polygon points="459.9,379.5 485.6,378.2 490.5,386.3 474.6,390 452.6,386.3" fill="#7e7e7e" stroke="#0a0a0a" stroke-width="1"/>
<polygon points="452.6,386.3 474.6,390 490.5,386.3 490.5,392.5 474.6,397.3 452.6,392.5" fill="#bdbdbd" stroke="#0a0a0a" stroke-width="1"/>
<!-- manipulator -->
<path d="M472,296Q505,302 510.7,327Q518,345 521,350L524,373" stroke="#30d030" stroke-width="1" fill="none"/>
<path d="M472,295Q500,298 509.6,327Q514,340 514.8,356" stroke="#e03030" stroke-width=".8" fill="none"/>
<ellipse cx="502.4" cy="312.4" rx="6.4" ry="6" fill="url(#rs)"/>
<circle cx="507.6" cy="318.4" r="9.2" fill="url(#gs)"/>
<path d="M471.2,364.3L521,356.2" stroke="#1ed01e" stroke-width="2.4"/>
<path d="M519,347.5Q526,346 533.5,354Q527,361 520,360Q516,354 519,347.5Z" fill="url(#gs)"/>
<path d="M514.8,355.8L532.4,361" stroke="#2030e0" stroke-width=".8"/>
<path d="M472,364.5L536,376" stroke="#e01212" stroke-width="3.2"/>
<path d="M534.4,369.8L557.3,379.5L539.6,388Q532,380 534.4,369.8Z" fill="url(#rs)"/>
<circle cx="540.2" cy="364.7" r="8.4" fill="url(#bs)"/>
<!-- nav cube -->
<g fill="#a4a4c6" opacity=".9">
<polygon points="645.6,88 638,95.9 653.5,95.9"/>
<polygon points="599.6,132.8 608,125 608,140.8"/>
<polygon points="691.9,132.8 683,125 683,140.8"/>
<polygon points="645.6,179 638,171.2 653.5,171.2"/>
<circle cx="687.1" cy="92" r="4"/>
<path d="M634.5,96.5Q623,99 618.5,106.5L621,108L611.5,113L612,103L615,104.5Q620,94 632.5,91.5Z"/>
<path d="M656.7,96.5Q668.2,99 672.7,106.5L670.2,108L679.7,113L679.2,103L676.2,104.5Q671.2,94 658.7,91.5Z"/>
</g>
<polygon points="661.5,165 668,162.3 675,165 675,173 668,175.5 661.5,173" fill="#7e7e9c"/>
<polygon points="661.5,165 668,162.3 675,165 668,167.5" fill="#a8a8c4"/>
<polygon points="679.5,166.8 685.5,166.8 682.5,170" fill="#3c3c58"/>
<polygon points="622.5,119.5 638.5,112.6 643,109 647.6,112.6 667.1,117.4 669.2,121 669.2,147.4 666.4,151 646.9,153 643,155.1 639.2,152.3 623.2,148.1 621.8,144.6 621.8,121" fill="#d6d6e4" stroke="#55556a" stroke-width=".6"/>
<polygon points="638.5,112.6 643,109 647.6,112.6 646.9,153 643,155.1 639.2,152.3" fill="#cbcbdb" stroke="#44445a" stroke-width=".6"/>
<text x="624.6" y="136.8" font-family="Liberation Sans" font-weight="bold" font-size="9.5" fill="#1a1a1a" textLength="11.2" lengthAdjust="spacingAndGlyphs">FRONT</text>
<text x="651.7" y="136.8" font-family="Liberation Sans" font-weight="bold" font-size="9.5" fill="#1a1a1a" textLength="14" lengthAdjust="spacingAndGlyphs">RIGHT</text>
<path d="M617.6,153.7V125.1" stroke="#1020f0" stroke-width="1.2"/>
<path d="M617.6,153.7L639.9,151.6" stroke="#30e030" stroke-width="1.2"/>
<path d="M617.6,153.7L632.9,157.2" stroke="#e02020" stroke-width="1.2"/>
<!-- corner axis -->
<text x="680" y="393" font-family="Liberation Sans" font-size="6" font-weight="bold" fill="#111">Z</text>
<rect x="679" y="395" width="1.5" height="2.8" fill="#1525c0"/>
<path d="M680,405.5H687" stroke="#d02020" stroke-width="1.2"/><path d="M680,406.5H685" stroke="#20a020" stroke-width=".8"/>
<text x="687.5" y="405" font-family="Liberation Sans" font-size="6" font-weight="bold" fill="#111">YX</text>
</svg>

<!-- doc tabs -->
<div class="a" style="left:191px;top:421.5px;width:83px;height:14.5px;background:#ececec;border:1px solid #e2e2e2;border-top:none"></div>
<div class="a" style="left:274px;top:421.5px;width:93.5px;height:14.5px;background:#f8f8f8;border:1px solid #e0e0e0;border-top:none"></div>
<svg style="left:194.9px;top:422.0px" width="16" height="15" viewBox="0 0 16 15"><g transform="scale(.95)"><path d="M2.5,2.1H8.3V4.1H4.9V5.7H7.4V7.5H4.9V12.7H2.5Z" fill="#dc1a1a"/><path d="M2.5,2.1H3.3V12.7H2.5Z" fill="#a80d0d"/><circle cx="9.6" cy="8.6" r="3.1" fill="#416fae"/><circle cx="9.6" cy="8.6" r="3.7" fill="none" stroke="#416fae" stroke-width="1.3" stroke-dasharray="1.3 1.6"/><circle cx="9.6" cy="8.6" r="1.1" fill="#c8d4e8"/></g></svg>
<div class="t" style="left:210.46px;top:426.62px;font-size:7.77px;color:#111;letter-spacing:-0.277px">Página inicial</div>
<div class="a" style="left:255.5px;top:425.4px;width:9.3px;height:8.2px;background:#c4c4c4"></div>
<svg style="left:257.5px;top:426.8px" width="6" height="6"><path d="M.8 .8L5 5M5 .8L.8 5" stroke="#fff" stroke-width="1.1"/></svg>
<svg style="left:281.0px;top:422.0px" width="16" height="15" viewBox="0 0 16 15"><g transform="scale(.95)"><path d="M2.5,2.1H8.3V4.1H4.9V5.7H7.4V7.5H4.9V12.7H2.5Z" fill="#dc1a1a"/><path d="M2.5,2.1H3.3V12.7H2.5Z" fill="#a80d0d"/><circle cx="9.6" cy="8.6" r="3.1" fill="#416fae"/><circle cx="9.6" cy="8.6" r="3.7" fill="none" stroke="#416fae" stroke-width="1.3" stroke-dasharray="1.3 1.6"/><circle cx="9.6" cy="8.6" r="1.1" fill="#c8d4e8"/></g></svg>
<div class="t" style="left:295.94px;top:426.64px;font-size:7.98px;color:#111;letter-spacing:-0.043px">ArchDetail : 1*</div>
<div class="a" style="left:349.5px;top:425.4px;width:9.3px;height:8.2px;background:#e46a4a"></div>
<svg style="left:351.5px;top:426.8px" width="6" height="6"><path d="M.8 .8L5 5M5 .8L.8 5" stroke="#fff" stroke-width="1.1"/></svg>

<!-- status bar -->
<div class="t" style="left:1.35px;top:445.43px;font-size:7.88px;color:#111;letter-spacing:-0.166px">Valid, nome interno: Extrusion005</div>
<div class="a" style="left:539px;top:441px;width:1px;height:17px;background:#dadada"></div>
<div class="a" style="left:595.5px;top:441px;width:1px;height:17px;background:#dadada"></div>
<div class="a" style="left:683px;top:441px;width:1px;height:17px;background:#dadada"></div>
<svg style="left:554.5px;top:444px" width="8" height="10"><rect x="0.7" y="0.7" width="5.6" height="8.4" rx="2.6" fill="none" stroke="#333" stroke-width="1"/><path d="M3.5 1.5V3.5" stroke="#333" stroke-width=".8"/></svg>
<div class="t" style="left:564.81px;top:446.17px;font-size:7.0px;font-weight:bold;color:#333;letter-spacing:-0.3px">CAD</div>
<svg style="left:585px;top:447px" width="6" height="4"><path d="M0 0.5H5L2.5 3.5Z" fill="#222"/></svg>
<div class="a" style="left:0;top:457.5px;width:696px;height:1.5px;background:#8a8a8a"></div>
</body></html>
